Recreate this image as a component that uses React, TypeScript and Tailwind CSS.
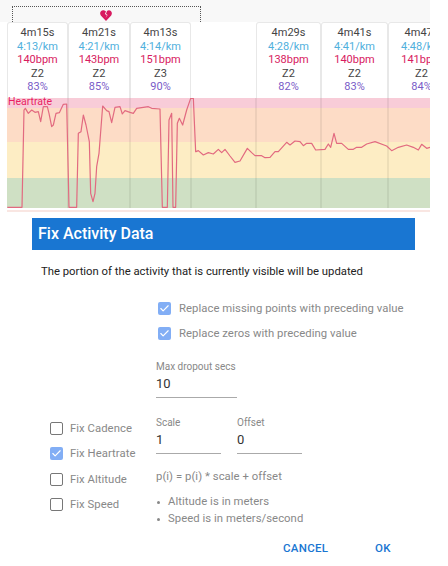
import { Check } from 'lucide-react'

const SPLITS = [
  { time: '4m15s', pace: '4:13/km', bpm: '140bpm', zone: 'Z2', pct: '83%', w: 'w-[61px]' },
  { time: '4m21s', pace: '4:21/km', bpm: '143bpm', zone: 'Z2', pct: '85%', w: 'w-[62px]' },
  { time: '4m13s', pace: '4:14/km', bpm: '151bpm', zone: 'Z3', pct: '90%', w: 'w-[61px]' },
  null,
  { time: '4m29s', pace: '4:28/km', bpm: '138bpm', zone: 'Z2', pct: '82%', w: 'w-[65px]' },
  { time: '4m41s', pace: '4:41/km', bpm: '140bpm', zone: 'Z2', pct: '83%', w: 'w-[67px]' },
  { time: '4m47s', pace: '4:48/km', bpm: '141bpm', zone: 'Z2', pct: '84%', w: 'w-[67px]' },
]

// traced from the chart, 3x coords
const LEFT = [[22,352],[66,352],[72,60],[76,55],[85,70],[95,60],[105,67],[115,65],[122,95],[130,50],[142,50],[147,70],[155,110],[160,105],[168,70],[178,68],[190,43],[200,42],[207,352],[230,352],[235,130],[243,125],[250,75],[258,105],[268,155],[272,310],[279,335],[285,310],[290,230],[297,190],[308,48],[320,62],[327,65],[335,98],[345,52],[360,50],[367,72],[375,62],[390,67],[400,70],[410,55],[430,52],[445,50],[455,55],[480,57],[487,352],[502,352],[507,90],[515,70],[519,352],[527,352],[532,100],[538,85],[548,105],[560,60],[572,25],[580,25],[587,185]]
const RIGHT = [[18,185],[25,182],[40,195],[55,188],[70,192],[85,178],[95,188],[105,178],[120,198],[135,217],[150,213],[172,175],[185,188],[195,197],[215,197],[225,203],[240,202],[255,185],[265,185],[290,157],[300,165],[315,153],[330,155],[340,167],[350,160],[365,160],[377,180],[405,178],[415,162],[422,172],[432,130],[440,160],[455,160],[475,178],[490,178],[500,172],[515,172],[530,162],[555,155],[590,168],[605,182],[625,172],[650,165],[670,172],[685,180],[695,163],[710,175],[720,172]]

const linePoints = [
  ...LEFT.map(([x, y]) => `${x / 3 - 7},${y / 3 - 8}`),
  ...RIGHT.map(([x, y]) => `${x / 3 + 183},${y / 3 - 8}`),
].join(' ')

function Box({ checked }: { checked?: boolean }) {
  return checked ? (
    <span className="flex h-[13px] w-[13px] shrink-0 items-center justify-center rounded-[2px] bg-[#82aef5]">
      <Check size={11} strokeWidth={2.5} color="#fff" />
    </span>
  ) : (
    <span className="h-[13px] w-[13px] shrink-0 rounded-[2px] border-[1.5px] border-[#777]" />
  )
}

function Field({ label, value, w }: { label: string; value: string; w: string }) {
  return (
    <div className={w}>
      <div className="h-[13px] text-[10px] leading-[13px] text-[#888]">{label}</div>
      <div className="h-[19px] pt-[3px] text-[13px] leading-[16px] text-[#333]">{value}</div>
      <div className="mt-[5px] h-px bg-[#aaa]" />
    </div>
  )
}

export default function App() {
  return (
    <div className="h-[566px] w-[448px] overflow-hidden bg-white font-['Roboto',sans-serif]">
      {/* top strip */}
      <div className="h-[22px] w-[430px] bg-[#f8f8f8] pl-3 pt-[6px]">
        <div className="relative h-4 w-[189px] border-x border-t border-dotted border-[#555]">
          <svg className="absolute left-[87px] top-[3px]" width="12" height="11" viewBox="0 0 12 11">
            <path d="M6 11 L0.8 5.4 C-0.8 3 0.6 0.2 3.2 0.2 C4.4 0.2 5.3 0.8 6 1.6 L4.9 4 L6.9 5.2 L5.6 8 L7.6 5 L6 3.8 L7 1 C7.6 0.5 8.2 0.2 8.9 0.2 C11.4 0.2 12.8 3 11.2 5.4 Z" fill="#d81b60" />
          </svg>
        </div>
      </div>

      {/* splits + chart */}
      <div className="relative ml-[7px] w-[423px]">
        <div className="flex h-[76px] overflow-hidden">
          {SPLITS.map((s, i) =>
            s ? (
              <div key={i} className={`${s.w} shrink-0 rounded-t-[3px] border-x border-t border-[#e8e8e8] pt-[3px] text-center text-[11px] leading-[13.5px] whitespace-nowrap`}>
                <div className="text-[#444]">{s.time}</div>
                <div className="text-[#4fb0dd]">{s.pace}</div>
                <div className="text-[#d81b60]">{s.bpm}</div>
                <div className="text-[#444]">{s.zone}</div>
                <div className="text-[#7a5cc8]">{s.pct}</div>
              </div>
            ) : (
              <div key={i} className="w-[65px] shrink-0" />
            ),
          )}
        </div>
        <svg className="block" width="423" height="110" viewBox="0 0 423 110">
          <rect width="423" height="10" fill="#f8ccd8" />
          <rect y="10" width="423" height="34" fill="#fddcc6" />
          <rect y="44" width="423" height="36" fill="#fdedc4" />
          <rect y="80" width="423" height="30" fill="#cfe0c4" />
          {[61, 123, 184, 249, 314, 381].map(x => (
            <line key={x} x1={x} x2={x} y1="0" y2="110" stroke="#000" strokeOpacity="0.13" />
          ))}
          <polyline points={linePoints} fill="none" stroke="#e26a80" strokeWidth="1.2" strokeLinejoin="round" />
        </svg>
        <div className="absolute left-[1px] top-[74px] text-[10.5px] leading-[12px] text-[#e91e63]">Heartrate</div>
        <div className="mt-[2px] h-[2px] bg-[#f9e6e2]" />
      </div>

      {/* dialog */}
      <div className="mt-[6px] ml-[32px] w-[383px]">
        <div className="flex h-[32px] items-center bg-[#1976d2] pl-[6px] text-[16px] font-medium text-white">Fix Activity Data</div>
        <div className="mt-[15px] pl-[9px] text-[11.3px] leading-[14px] text-[#222]">The portion of the activity that is currently visible will be updated</div>

        <div className="mt-[23px] ml-[126px] flex flex-col gap-[12px] text-[11.3px] leading-[13px] tracking-[0.05px] whitespace-nowrap text-[#888]">
          <div className="flex items-center gap-[8px]"><Box checked /><span>Replace missing points with preceding value</span></div>
          <div className="flex items-center gap-[8px]"><Box checked /><span>Replace zeros with preceding value</span></div>
        </div>

        <div className="mt-[20px] ml-[124px]">
          <Field label="Max dropout secs" value="10" w="w-[81px]" />
        </div>

        <div className="mt-[18px] flex">
          <div className="ml-[18px] flex w-[106px] flex-col gap-[12.3px] pt-[6px] text-[11.3px] leading-[13px] tracking-[0.05px] whitespace-nowrap text-[#888]">
            <div className="flex items-center gap-[7px]"><Box /><span>Fix Cadence</span></div>
            <div className="flex items-center gap-[7px]"><Box checked /><span>Fix Heartrate</span></div>
            <div className="flex items-center gap-[7px]"><Box /><span>Fix Altitude</span></div>
            <div className="flex items-center gap-[7px]"><Box /><span>Fix Speed</span></div>
          </div>
          <div>
            <div className="flex gap-[16px]">
              <Field label="Scale" value="1" w="w-[65px]" />
              <Field label="Offset" value="0" w="w-[65px]" />
            </div>
            <div className="mt-[16px] text-[11.3px] leading-[14px] tracking-[0.05px] text-[#888]">p(i) = p(i) * scale + offset</div>
            <ul className="mt-[11px] flex flex-col gap-[3px] text-[11.3px] leading-[14px] tracking-[0.05px] text-[#888]">
              <li className="flex items-center"><span className="ml-[1px] mr-[8px] h-[3px] w-[3px] rounded-full bg-[#888]" />Altitude is in meters</li>
              <li className="flex items-center"><span className="ml-[1px] mr-[8px] h-[3px] w-[3px] rounded-full bg-[#888]" />Speed is in meters/second</li>
            </ul>
          </div>
        </div>

        <div className="mt-[15px] flex pl-[251px] text-[11.5px] leading-[14px] font-medium tracking-[0.3px] text-[#1976d2]">
          <span className="w-[92px]">CANCEL</span>
          <span>OK</span>
        </div>
      </div>
    </div>
  )
}
